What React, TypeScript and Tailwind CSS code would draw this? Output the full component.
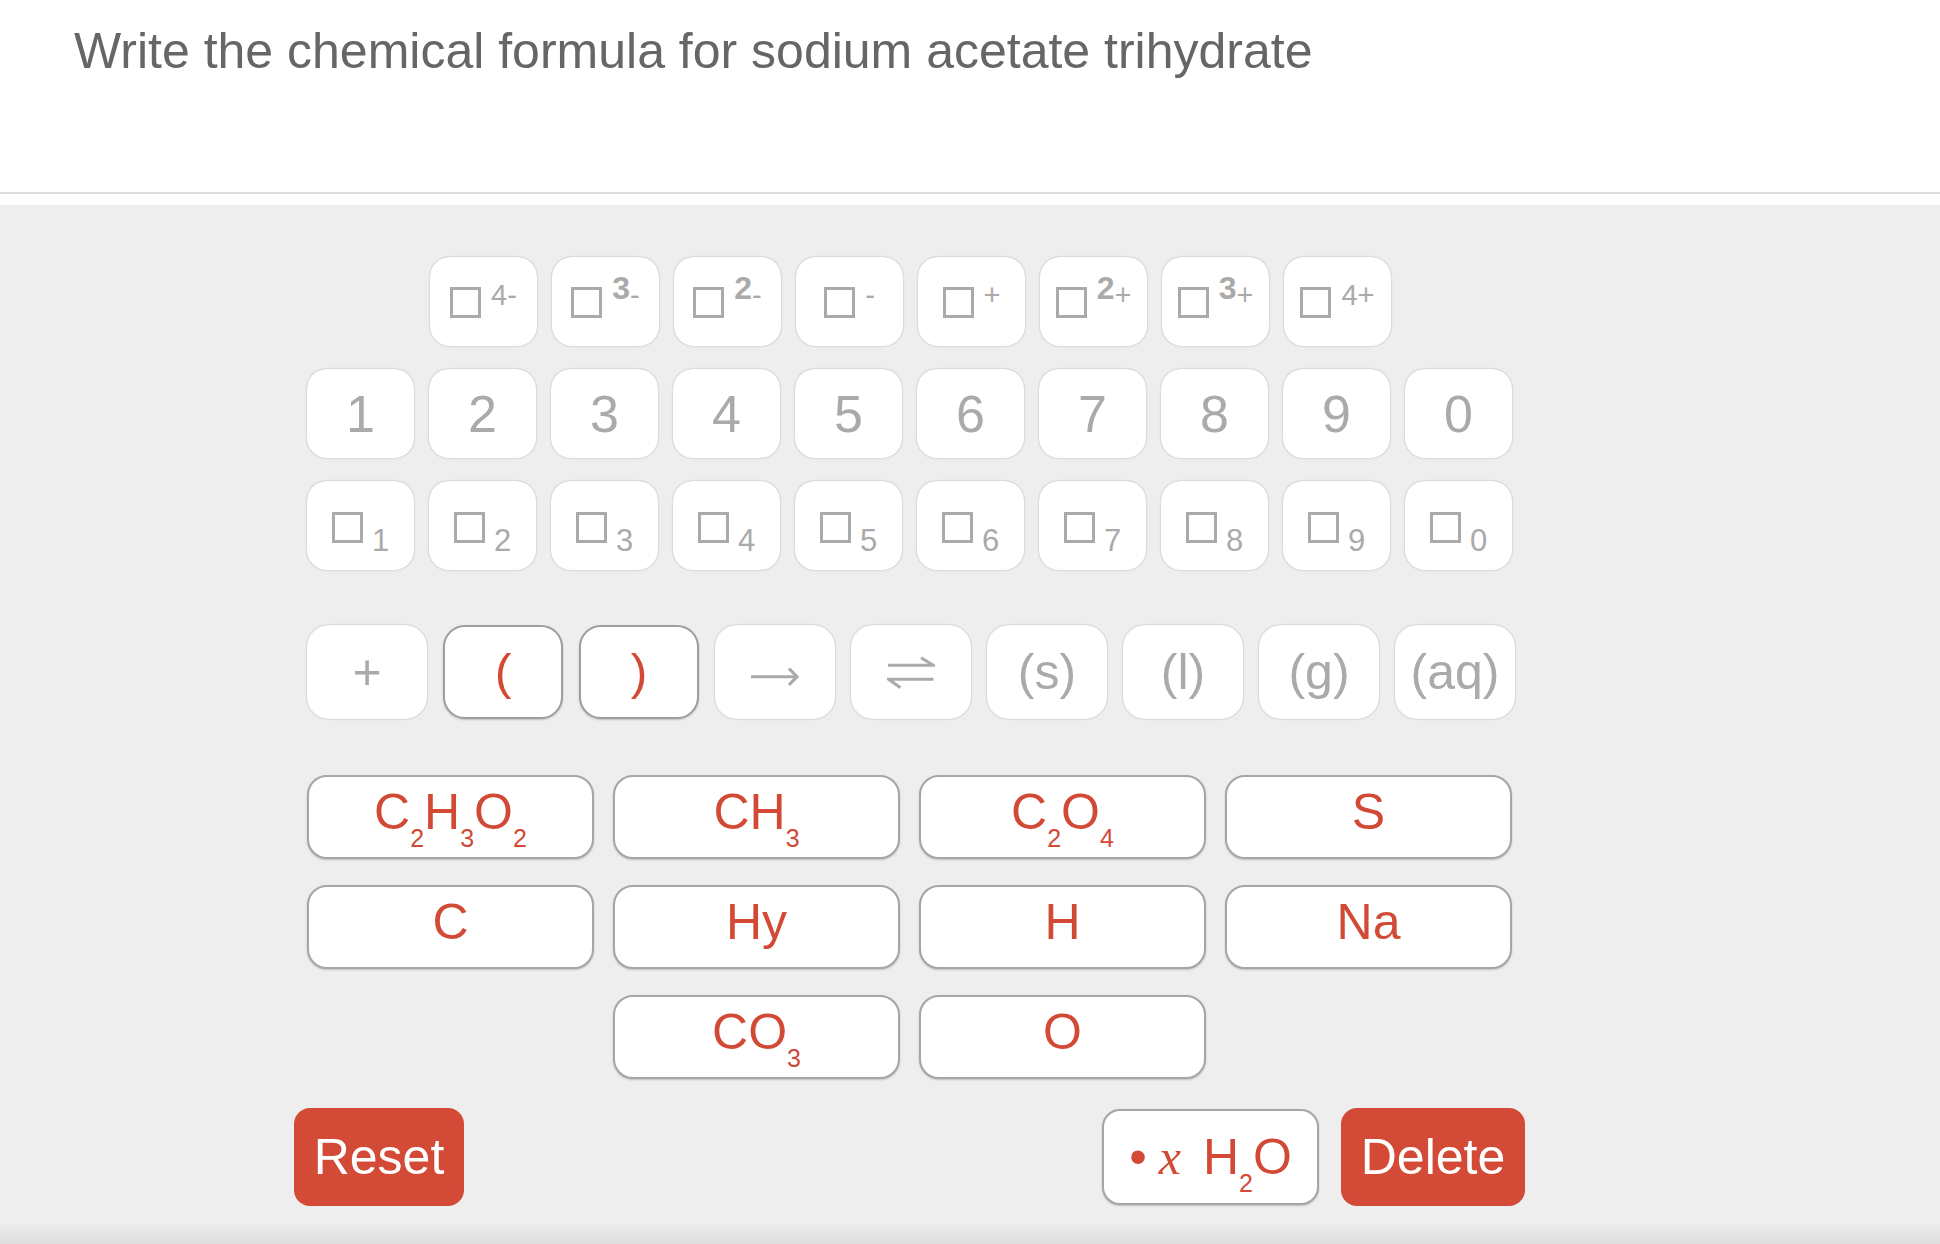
import React from "react";

const FONT = { fontFamily: '"Liberation Sans", Arial, Helvetica, sans-serif' };

function Formula({ text }: { text: string }) {
  const parts = text.match(/[A-Za-z]+|\d+/g) || [];
  return (
    <span>
      {parts.map((p, i) =>
        /\d/.test(p) ? (
          <span key={i} className="relative top-[18px] text-[25px]">
            {p}
          </span>
        ) : (
          <span key={i}>{p}</span>
        )
      )}
    </span>
  );
}

function ChargeKey({ n, sign, bold }: { n: string; sign: string; bold?: boolean }) {
  return (
    <div className="w-[107px] h-[89px] shrink-0 rounded-[20px] bg-white shadow-[0_0_2px_rgba(0,0,0,0.3)] flex justify-center items-start pt-[30px] text-[#aaaaaa]">
      <span className="w-[31px] h-[31px] border-[3px] border-[#aaaaaa] shrink-0" />
      {bold ? (
        <>
          <span className="ml-[10px] mt-[-15px] text-[32px] font-bold leading-[32px]">{n}</span>
          <span className="mt-[-6px] text-[29px] leading-[29px]">{sign}</span>
        </>
      ) : (
        <span className="ml-[10px] mt-[-6px] text-[29px] leading-[29px]">
          {n}
          {sign}
        </span>
      )}
    </div>
  );
}

function DigitKey({ d }: { d: string }) {
  return (
    <div className="w-[107px] h-[89px] shrink-0 rounded-[20px] bg-white shadow-[0_0_2px_rgba(0,0,0,0.3)] flex justify-center items-center text-[52px] leading-none text-[#aaaaaa]">
      {d}
    </div>
  );
}

function SubKey({ d }: { d: string }) {
  return (
    <div className="w-[107px] h-[89px] shrink-0 rounded-[20px] bg-white shadow-[0_0_2px_rgba(0,0,0,0.3)] flex justify-center items-start pt-[31px] text-[#aaaaaa]">
      <span className="w-[31px] h-[31px] border-[3px] border-[#aaaaaa] shrink-0" />
      <span className="ml-[9px] mt-[13px] text-[31px] leading-[31px]">{d}</span>
    </div>
  );
}

function SymKey({ children, active }: { children: React.ReactNode; active?: boolean }) {
  return (
    <div
      className={
        active
          ? "w-[120px] h-[94px] shrink-0 rounded-[22px] bg-white border-2 border-[#9e9e9e] shadow-[0_1px_2px_rgba(0,0,0,0.2)] flex justify-center items-center text-[50px] leading-none text-[#d24a36]"
          : "w-[120px] h-[94px] shrink-0 rounded-[22px] bg-white shadow-[0_0_2px_rgba(0,0,0,0.3)] flex justify-center items-center text-[50px] leading-none text-[#aaaaaa]"
      }
    >
      {children}
    </div>
  );
}

function IonKey({ f, className = "" }: { f: string; className?: string }) {
  return (
    <div
      className={
        "h-[84px] rounded-[20px] bg-white border-2 border-[#a6a6a6] shadow-[0_1px_2px_rgba(0,0,0,0.2)] flex justify-center items-center pb-[10px] text-[50px] leading-none text-[#d24a36] " +
        className
      }
    >
      <Formula text={f} />
    </div>
  );
}

export default function App() {
  const charges: { n: string; sign: string; bold?: boolean }[] = [
    { n: "4", sign: "-" },
    { n: "3", sign: "-", bold: true },
    { n: "2", sign: "-", bold: true },
    { n: "", sign: "-" },
    { n: "", sign: "+" },
    { n: "2", sign: "+", bold: true },
    { n: "3", sign: "+", bold: true },
    { n: "4", sign: "+" },
  ];
  const digits = ["1", "2", "3", "4", "5", "6", "7", "8", "9", "0"];

  return (
    <div className="w-[1940px] h-[1244px] overflow-hidden flex flex-col bg-white" style={FONT}>
      <div className="h-[194px] shrink-0 border-b-2 border-[#dddddd] pl-[74px] pt-[22px]">
        <div className="text-[50px] leading-[58px] text-[#666666]">
          Write the chemical formula for sodium acetate trihydrate
        </div>
      </div>
      <div className="h-[11px] shrink-0 bg-white" />
      <div className="flex-1 bg-[#eeeeee] flex flex-col pl-[294px]">
        <div className="ml-[13px] flex flex-col">
          <div className="mt-[52px] ml-[123px] flex gap-[15px]">
            {charges.map((c, i) => (
              <ChargeKey key={i} n={c.n} sign={c.sign} bold={c.bold} />
            ))}
          </div>
          <div className="mt-[23px] flex gap-[15px]">
            {digits.map((d) => (
              <DigitKey key={d} d={d} />
            ))}
          </div>
          <div className="mt-[23px] flex gap-[15px]">
            {digits.map((d) => (
              <SubKey key={d} d={d} />
            ))}
          </div>
          <div className="mt-[55px] flex gap-[16px]">
            <SymKey>+</SymKey>
            <SymKey active>(</SymKey>
            <SymKey active>)</SymKey>
            <SymKey>
              <svg width="50" height="20" viewBox="0 0 50 20" className="mt-[10px]" fill="none" stroke="#aaaaaa">
                <path d="M1 9.7 H46" strokeWidth="3" />
                <path d="M39 1.5 L47 9.7 L39 18" strokeWidth="3.2" strokeLinejoin="miter" />
              </svg>
            </SymKey>
            <SymKey>
              <svg width="48" height="33" viewBox="0 0 48 33" fill="none" stroke="#aaaaaa" strokeWidth="3">
                <path d="M1 9.3 H46.5 L34 1.7" strokeLinejoin="miter" />
                <path d="M46.5 23.3 H1.5 L13.5 31.7" strokeLinejoin="miter" />
              </svg>
            </SymKey>
            <SymKey>(s)</SymKey>
            <SymKey>(l)</SymKey>
            <SymKey>(g)</SymKey>
            <SymKey>(aq)</SymKey>
          </div>
          <div className="mt-[56px] grid grid-cols-[repeat(4,287px)] gap-x-[19px] gap-y-[26px]">
            <IonKey f="C2H3O2" />
            <IonKey f="CH3" />
            <IonKey f="C2O4" />
            <IonKey f="S" />
            <IonKey f="C" />
            <IonKey f="Hy" />
            <IonKey f="H" />
            <IonKey f="Na" />
            <IonKey f="CO3" className="col-start-2" />
            <IonKey f="O" />
          </div>
        </div>
        <div className="mt-[29px] w-[1231px] flex items-center">
          <div className="w-[170px] h-[98px] rounded-[16px] bg-[#d34a36] text-white text-[50px] leading-none flex items-center justify-center">
            Reset
          </div>
          <div className="ml-auto w-[217px] h-[96px] rounded-[18px] bg-white border-2 border-[#a6a6a6] shadow-[0_1px_2px_rgba(0,0,0,0.2)] flex items-center justify-center text-[50px] leading-none text-[#d24a36]">
            <span>•</span>
            <span
              className="ml-[12px] italic"
              style={{ fontFamily: '"Liberation Serif", "Times New Roman", serif' }}
            >
              x
            </span>
            <span className="ml-[22px]">
              <Formula text="H2O" />
            </span>
          </div>
          <div className="ml-[22px] w-[184px] h-[98px] rounded-[16px] bg-[#d34a36] text-white text-[50px] leading-none flex items-center justify-center">
            Delete
          </div>
        </div>
        <div className="mt-auto h-[22px] -ml-[294px] bg-linear-to-b from-[#eeeeee] to-[#dcdcdc]" />
      </div>
    </div>
  );
}
